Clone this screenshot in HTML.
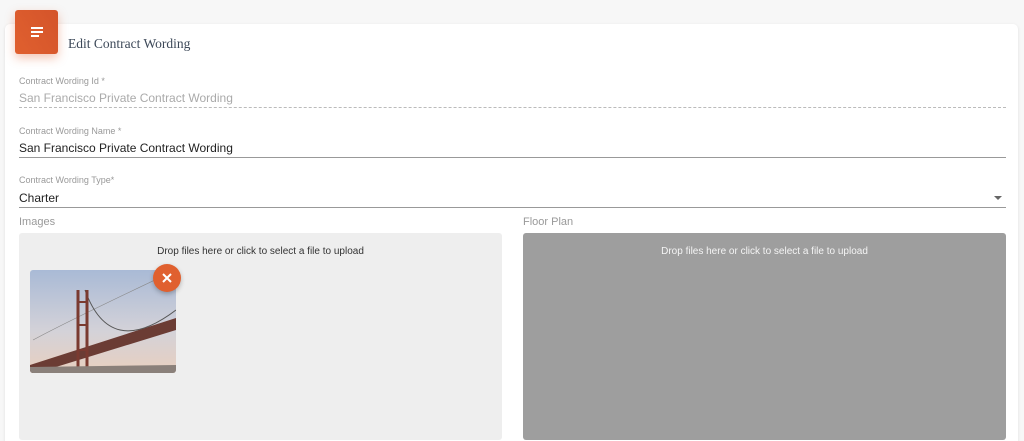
<!DOCTYPE html><html><head><style>
html,body{margin:0;width:1024px;height:441px;overflow:hidden}
body{background:#f7f7f7;font-family:"Liberation Sans",sans-serif;position:relative}
.card{position:absolute;left:5px;top:24px;width:1013px;height:430px;background:#fff;border-radius:5px;box-shadow:0 1px 3px rgba(0,0,0,.1)}
.icon{position:absolute;left:15px;top:10px;width:43px;height:44px;background:linear-gradient(60deg,#e0602f,#d4542a);border-radius:3px;box-shadow:0 4px 10px rgba(220,90,40,.35)}
.icon i{position:absolute;left:16px;height:1.6px;background:#fff}
.title{position:absolute;left:68px;top:36px;font-family:"Liberation Serif",serif;font-size:13.5px;color:#3c4858}
.lbl{position:absolute;left:19px;font-size:9px;color:#999}
.val{position:absolute;left:19px;font-size:12px;color:#222}
.line{position:absolute;left:19px;width:987px;border-top:1px solid #ccc}
.zone{position:absolute;top:233px;height:207px;width:483px;border-radius:3px;font-size:10px;text-align:center;padding-top:13px;box-sizing:border-box}
</style></head><body>
<div class="card"></div>
<div class="icon"><i style="top:17px;width:12px"></i><i style="top:21px;width:12px"></i><i style="top:25px;width:8px"></i></div>
<div class="title">Edit Contract Wording</div>
<div class="lbl" style="top:76px">Contract Wording Id *</div>
<div class="val" style="top:91px;color:#aaa">San Francisco Private Contract Wording</div>
<div class="line" style="top:107px;border-top:1px dashed #bbb"></div>
<div class="lbl" style="top:126px">Contract Wording Name *</div>
<div class="val" style="top:141px">San Francisco Private Contract Wording</div>
<div class="line" style="top:157px;border-color:#999"></div>
<div class="lbl" style="top:175px">Contract Wording Type*</div>
<div class="val" style="top:191px">Charter</div>
<div style="position:absolute;left:994px;top:196px;border:4px solid transparent;border-top:4px solid #666"></div>
<div class="line" style="top:207px;border-color:#999"></div>
<div class="lbl" style="top:216px;font-size:11px;color:#999">Images</div>
<div class="lbl" style="top:216px;left:523px;font-size:11px;color:#999">Floor Plan</div>
<div class="zone" style="left:19px;background:#eee;color:#333">Drop files here or click to select a file to upload</div>
<div class="zone" style="left:523px;background:#9e9e9e;color:#f4f4f4">Drop files here or click to select a file to upload</div>
<div style="position:absolute;left:30px;top:270px;width:146px;height:103px;border-radius:3px;overflow:hidden;background:linear-gradient(#a9bad6,#d4d2d8 60%,#e8cfbf)">
<svg width="146" height="103" style="position:absolute;left:0;top:0">
<path d="M0 95 L146 48 L146 60 L0 105Z" fill="#6b3c34"/>
<path d="M3 70 Q40 50 146 0" stroke="#888" fill="none" stroke-width=".6"/>
<path d="M55 20 Q80 90 146 40" stroke="#555" fill="none" stroke-width="1"/>
<path d="M48 20 L48 103 M57 20 L57 103" stroke="#7a3a30" stroke-width="3"/>
<path d="M48 32 L57 32 M48 55 L57 55 M48 80 L57 80" stroke="#7a3a30" stroke-width="2"/>
<path d="M0 97 L146 95 L146 103 L0 103Z" fill="#8a807a"/>
</svg></div>
<div style="position:absolute;left:153px;top:264px;width:28px;height:28px;border-radius:50%;background:#e0602f;box-shadow:0 2px 5px rgba(0,0,0,.25)">
<svg width="28" height="28"><path d="M10 10L18 18M18 10L10 18" stroke="#fff" stroke-width="2"/></svg></div>
</body></html>
